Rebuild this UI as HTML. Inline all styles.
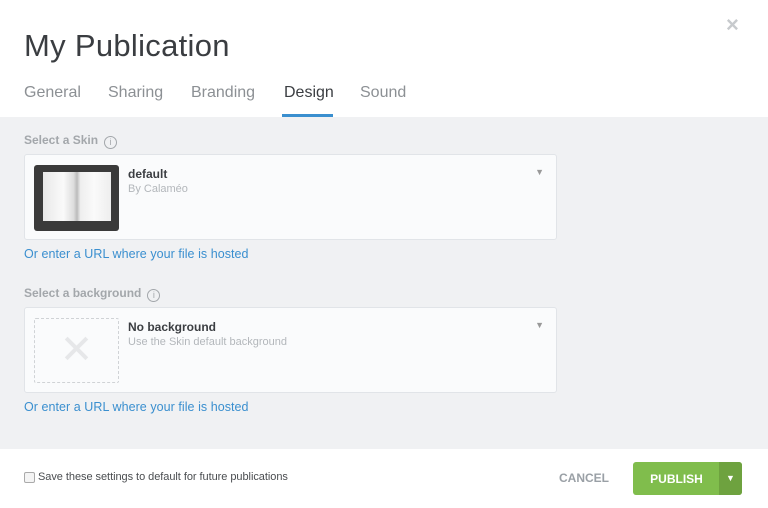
<!DOCTYPE html><html><head><style>
body{margin:0;width:768px;height:508px;background:#fff;font-family:"Liberation Sans",sans-serif;position:relative;overflow:hidden}
.a{position:absolute}
.tab{position:absolute;top:84px;font-size:16px;color:#8c9094}
.gray{position:absolute;left:0;top:117px;width:768px;height:332px;background:#f0f1f3}
.lbl{font-size:12px;font-weight:bold;color:#a3a7ab}
.box{position:absolute;left:24px;width:531px;height:84px;background:#fafbfc;border:1px solid #e1e4e8;border-radius:3px}
.link{font-size:12.5px;color:#3a8fcf;letter-spacing:0.05px}
.info{display:inline-block;width:11px;height:11px;border:1px solid #a3a7ab;border-radius:50%;font-size:9px;text-align:center;line-height:11px;color:#a3a7ab;font-weight:normal;margin-left:6px;vertical-align:-1px}
.t1{font-size:12px;font-weight:bold;color:#3b3e42}
.t2{font-size:11px;color:#b3b7bb}
.arr{position:absolute;right:12px;top:12px;font-size:9px;color:#999}
</style></head><body>
<div class="a" style="left:24px;top:28px;font-size:31px;color:#3a3d41;letter-spacing:0.3px">My Publication</div>
<div class="a" style="left:726px;top:12px;font-size:22px;font-weight:bold;color:#c7cacd">×</div>
<div class="tab" style="left:24px">General</div>
<div class="tab" style="left:108px">Sharing</div>
<div class="tab" style="left:191px">Branding</div>
<div class="tab" style="left:284px;color:#3b3e42">Design</div>
<div class="tab" style="left:360px">Sound</div>
<div class="a" style="left:282px;top:114px;width:51px;height:3px;background:#3a8fcf"></div>
<div class="gray"></div>
<div class="a lbl" style="left:24px;top:133px">Select a Skin<span class="info">i</span></div>
<div class="box" style="top:154px">
 <div class="a" style="left:9px;top:10px;width:85px;height:66px;background:#3a3a3a;border-radius:3px">
  <div class="a" style="left:9px;top:7px;width:68px;height:49px;background:linear-gradient(90deg,#e8e8e8,#fafafa 30%,#ddd 45%,#bbb 50%,#eee 55%,#fafafa 75%,#eee)"></div>
 </div>
 <div class="a t1" style="left:103px;top:12px">default</div>
 <div class="a t2" style="left:103px;top:28px">By Calaméo</div>
 <div class="arr">▼</div>
</div>
<div class="a link" style="left:24px;top:247px">Or enter a URL where your file is hosted</div>
<div class="a lbl" style="left:24px;top:286px">Select a background<span class="info">i</span></div>
<div class="box" style="top:307px">
 <div class="a" style="left:9px;top:10px;width:83px;height:63px;border:1px dashed #d0d3d6;border-radius:2px;text-align:center;line-height:63px;font-size:40px;color:#e6e7e9">✕</div>
 <div class="a t1" style="left:103px;top:12px">No background</div>
 <div class="a t2" style="left:103px;top:28px">Use the Skin default background</div>
 <div class="arr">▼</div>
</div>
<div class="a link" style="left:24px;top:400px">Or enter a URL where your file is hosted</div>
<div class="a" style="left:24px;top:472px;width:9px;height:9px;border:1px solid #aaa;border-radius:2px;background:#f4f4f4"></div>
<div class="a" style="left:38px;top:471px;font-size:11px;color:#4a4d50;letter-spacing:-0.05px">Save these settings to default for future publications</div>
<div class="a" style="left:559px;top:471px;font-size:12px;font-weight:bold;color:#9aa0a6">CANCEL</div>
<div class="a" style="left:633px;top:462px;width:109px;height:33px;background:#80bd4c;border-radius:3px;overflow:hidden">
 <div class="a" style="left:0;top:10px;width:87px;text-align:center;font-size:12px;font-weight:bold;color:#fff">PUBLISH</div>
 <div class="a" style="left:86px;top:0;width:23px;height:33px;background:#6ea23f;color:#fff;font-size:9px;text-align:center;line-height:33px">▼</div>
</div>
</body></html>
